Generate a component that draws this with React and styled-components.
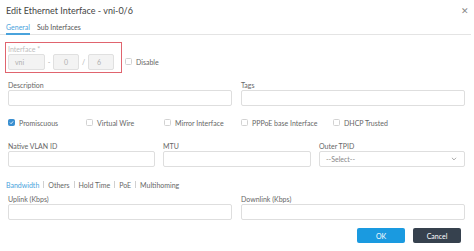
import React from "react";
import styled, { createGlobalStyle } from "styled-components";

const Global = createGlobalStyle`
  html, body { margin: 0; padding: 0; background: #fff; }
  body { font-family: Lato, "Open Sans", sans-serif; color: #333; }
  * { box-sizing: border-box; }
`;

const Dialog = styled.div`
  width: 474px;
  height: 251px;
  background: #fff;
  position: relative;
  overflow: hidden;
`;

const Header = styled.div`
  display: flex;
  align-items: center;
  justify-content: space-between;
  height: 20px;
  padding: 0 5px 0 6px;
  h1 {
    margin: 0;
    font-size: 9px;
    font-weight: 400;
    color: #444;
  }
`;

const Close = styled.span`
  font-size: 9px;
  color: #888;
  line-height: 1;
`;

const Tabs = styled.div`
  display: flex;
  gap: 7px;
  height: 15px;
  padding: 0 0 0 6px;
  border-bottom: 1px solid #e4e4e4;
  margin-right: 3px;
`;

const Tab = styled.div`
  font-size: 7px;
  color: ${(p) => (p.$active ? "#4aa3dc" : "#555")};
  padding-top: 3px;
  border-bottom: ${(p) => (p.$active ? "2px solid #4aa3dc" : "2px solid transparent")};
  margin-bottom: -1px;
`;

const Body = styled.div`
  padding: 0 9px 0 8px;
`;

const InterfaceBox = styled.div`
  display: flex;
  align-items: flex-end;
  gap: 3px;
  margin-top: 7px;
  margin-left: -3px;
`;

const RedBox = styled.div`
  width: 117px;
  height: 31px;
  border: 1px solid #e0646e;
  padding: 2px 2px 0 2px;
`;

const Label = styled.div`
  font-size: 7px;
  color: ${(p) => (p.$muted ? "#bdbdbd" : "#666")};
  height: ${(p) => p.$h || 9}px;
  line-height: 9px;
  white-space: nowrap;
`;

const Parts = styled.div`
  display: flex;
  align-items: center;
  margin-top: 1px;
`;

const Part = styled.div`
  width: ${(p) => p.$w}px;
  height: 16px;
  background: #f3f3f3;
  border: 1px solid #e0e0e0;
  border-radius: 2px;
  font-size: 7px;
  color: #b0b0b0;
  display: flex;
  align-items: center;
  padding-left: ${(p) => p.$pl}px;
`;

const Sep = styled.span`
  width: ${(p) => p.$w}px;
  text-align: center;
  font-size: 7px;
  color: #b0b0b0;
`;

const Check = styled.span`
  width: 7px;
  height: 7px;
  border: 1px solid ${(p) => (p.$on ? "#3a8fd0" : "#d2d2d2")};
  background: ${(p) => (p.$on ? "#3a8fd0" : "#fff")};
  border-radius: 1.5px;
  display: inline-flex;
  align-items: center;
  justify-content: center;
  flex: none;
`;

const CheckItem = styled.label`
  display: flex;
  align-items: center;
  gap: 4px;
  font-size: 7px;
  color: #666;
  width: ${(p) => p.$w || "auto"};
  white-space: nowrap;
`;

const DisableWrap = styled.div`
  display: flex;
  align-items: center;
  height: 19px;
  padding-bottom: 4px;
`;

const Row = styled.div`
  display: grid;
  grid-template-columns: ${(p) => p.$cols};
  column-gap: ${(p) => p.$gap}px;
  margin-top: ${(p) => p.$mt}px;
`;

const Input = styled.div`
  height: 16px;
  border: 1px solid #dedede;
  border-radius: 2px;
  background: #fff;
  display: flex;
  align-items: center;
  justify-content: space-between;
  padding: 0 7px 0 6px;
  font-size: 7px;
  color: #888;
`;

const Checks = styled.div`
  display: flex;
  align-items: center;
  margin-top: 12px;
  height: 9px;
`;

const SubTabs = styled.div`
  display: flex;
  align-items: center;
  margin-top: 13px;
  margin-left: -2px;
  height: 9px;
`;

const SubTab = styled.span`
  font-size: 7px;
  color: ${(p) => (p.$active ? "#4aa3dc" : "#666")};
`;

const Divider = styled.span`
  width: 1px;
  height: 7px;
  background: #d0d0d0;
  margin: 0 4px;
`;

const Footer = styled.div`
  display: flex;
  justify-content: flex-end;
  gap: 8px;
  margin-top: 8px;
  padding-right: 4px;
`;

const Button = styled.button`
  width: 48px;
  height: 15px;
  border: none;
  border-radius: 2px;
  font-family: inherit;
  font-size: 7px;
  color: #fff;
  background: ${(p) => (p.$primary ? "#1a9ae0" : "#36414e")};
  padding: 0;
`;

const Tick = () => (
  <svg width="5" height="5" viewBox="0 0 10 10">
    <path d="M2 5.2 L4.2 7.4 L8.2 2.8" fill="none" stroke="#fff" strokeWidth="1.8" />
  </svg>
);

const Chevron = () => (
  <svg width="6" height="4" viewBox="0 0 10 6">
    <path d="M1.5 1 L5 4.5 L8.5 1" fill="none" stroke="#888" strokeWidth="1.2" />
  </svg>
);

const subTabs = ["Bandwidth", "Others", "Hold Time", "PoE", "Multihoming"];

export default function App() {
  return (
    <>
      <Global />
      <Dialog>
        <Header>
          <h1>Edit Ethernet Interface - vni-0/6</h1>
          <Close>✕</Close>
        </Header>
        <Tabs>
          <Tab $active>General</Tab>
          <Tab>Sub Interfaces</Tab>
        </Tabs>
        <Body>
          <InterfaceBox>
            <RedBox>
              <Label $muted $h={8}>Interface *</Label>
              <Parts>
                <Part $w={37} $pl={6}>vni</Part>
                <Sep $w={8}>-</Sep>
                <Part $w={26} $pl={10}>0</Part>
                <Sep $w={9}>/</Sep>
                <Part $w={26} $pl={8}>6</Part>
              </Parts>
            </RedBox>
            <DisableWrap>
              <CheckItem>
                <Check />
                Disable
              </CheckItem>
            </DisableWrap>
          </InterfaceBox>

          <Row $cols="224px 224px" $gap={9} $mt={8}>
            <div>
              <Label>Description</Label>
              <Input />
            </div>
            <div>
              <Label>Tags</Label>
              <Input />
            </div>
          </Row>

          <Checks>
            <CheckItem $w="78px">
              <Check $on>
                <Tick />
              </Check>
              Promiscuous
            </CheckItem>
            <CheckItem $w="78px">
              <Check />
              Virtual Wire
            </CheckItem>
            <CheckItem $w="77px">
              <Check />
              Mirror Interface
            </CheckItem>
            <CheckItem $w="92px">
              <Check />
              PPPoE base Interface
            </CheckItem>
            <CheckItem>
              <Check />
              DHCP Trusted
            </CheckItem>
          </Checks>

          <Row $cols="147px 148px 146px" $gap={8} $mt={15}>
            <div>
              <Label>Native VLAN ID</Label>
              <Input />
            </div>
            <div>
              <Label>MTU</Label>
              <Input />
            </div>
            <div>
              <Label>Outer TPID</Label>
              <Input>
                --Select--
                <Chevron />
              </Input>
            </div>
          </Row>

          <SubTabs>
            {subTabs.map((t, i) => (
              <React.Fragment key={t}>
                {i > 0 && <Divider />}
                <SubTab $active={i === 0}>{t}</SubTab>
              </React.Fragment>
            ))}
          </SubTabs>

          <Row $cols="224px 224px" $gap={9} $mt={6}>
            <div>
              <Label>Uplink (Kbps)</Label>
              <Input />
            </div>
            <div>
              <Label>Downlink (Kbps)</Label>
              <Input />
            </div>
          </Row>

          <Footer>
            <Button $primary>OK</Button>
            <Button>Cancel</Button>
          </Footer>
        </Body>
      </Dialog>
    </>
  );
}
